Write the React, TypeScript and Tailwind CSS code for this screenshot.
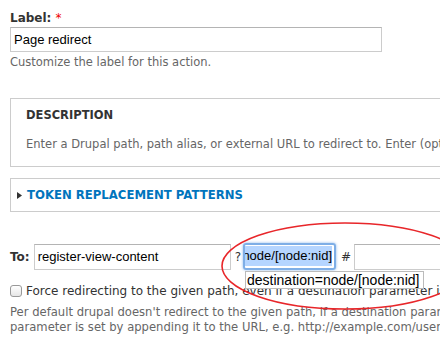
import React from "react";

export default function App() {
  const ui = { fontFamily: '"DejaVu Sans", Verdana, sans-serif' };
  const inp = { fontFamily: '"Liberation Sans", Arial, sans-serif' };
  return (
    <div className="relative w-[440px] h-[353px] overflow-hidden bg-white text-[#333]" style={ui}>
      <div className="pl-[10px] pt-[11px] flex flex-col">
        <div className="text-[12px] leading-[14px] font-bold text-[#333]">
          Label: <span className="text-[#e00] font-normal">*</span>
        </div>
        <div className="mt-[2px] w-[372px] h-[25px] border border-[#ccc] border-t-[#b4b4b4] flex items-center pl-[3px] text-[13px] text-black" style={inp}>
          Page redirect
        </div>
        <div className="mt-[3px] text-[11.5px] leading-[14px] text-[#666] whitespace-nowrap">Customize the label for this action.</div>

        <div className="mt-[29px] w-[470px] h-[69px] border border-[#ccc] flex flex-col pl-[15px] pt-[9px] shrink-0">
          <div className="text-[11.5px] leading-[14px] font-bold text-[#333]">DESCRIPTION</div>
          <div className="mt-[15px] text-[11.5px] leading-[14px] text-[#666] whitespace-nowrap">
            Enter a Drupal path, path alias, or external URL to redirect to. Enter (optional) queries after "?" and (optional) anchor after "#".
          </div>
        </div>

        <div className="mt-[11px] w-[470px] h-[34px] border border-[#ccc] flex items-center pl-[6px] shrink-0">
          <svg width="5" height="7" viewBox="0 0 5 7" className="mr-[5px] shrink-0"><path d="M0 0 L5 3.5 L0 7 Z" fill="#333" /></svg>
          <span className="text-[11.7px] leading-[14px] font-bold text-[#0074bd] whitespace-nowrap">TOKEN REPLACEMENT PATTERNS</span>
        </div>

        <div className="mt-[32px] flex items-center relative">
          <span className="text-[12px] font-bold text-[#333] mr-[4px] shrink-0">To:</span>
          <div className="w-[197px] h-[26px] shrink-0 border border-[#ccc] border-t-[#b4b4b4] flex items-center pl-[3px] text-[13px] text-black" style={inp}>
            register-view-content
          </div>
          <span className="ml-[4px] mr-[2px] text-[12px] text-[#333] shrink-0">?</span>
          <div className="w-[93px] h-[27px] -mt-[2px] shrink-0 rounded-[3px] border-[2px] border-[#7eaee6] shadow-[0_0_3px_#8cb8ec] flex items-center justify-end pr-[2px] overflow-hidden text-[13px] text-black" style={inp}>
            <span className="whitespace-nowrap bg-[#b5d5ff] shrink-0">node/[node:nid]</span>
          </div>
          <span className="ml-[5px] mr-[3px] text-[12px] text-[#333] shrink-0">#</span>
          <div className="w-[110px] h-[26px] shrink-0 border border-[#ccc] border-t-[#b4b4b4]"></div>
          <div className="absolute left-[235px] top-[27px] w-[179px] h-[18px] border border-[#bbb] bg-white flex items-center pl-[1px] text-[14px] text-black z-10 whitespace-nowrap" style={inp}>
            destination=node/[node:nid]
          </div>
        </div>

        <div className="mt-[14px] flex items-center">
          <div className="w-[12px] h-[12px] shrink-0 rounded-[3px] border border-[#999] bg-gradient-to-b from-white to-[#e6e6e6] mr-[4px]"></div>
          <span className="text-[12px] leading-[14px] text-[#333] whitespace-nowrap">Force redirecting to the given path, even if a destination parameter is given.</span>
        </div>
        <div className="mt-[7px] text-[11.6px] leading-[15px] text-[#666] whitespace-nowrap">
          <div>Per default drupal doesn't redirect to the given path, if a destination parameter is set.</div>
          <div>parameter is set by appending it to the URL, e.g. http://example.com/user?destination=node/1</div>
        </div>
      </div>
      <svg className="absolute left-0 top-0 pointer-events-none z-20" width="440" height="353">
        <ellipse cx="345" cy="266" rx="123" ry="43" fill="none" stroke="#e8262a" strokeWidth="1.6" />
      </svg>
    </div>
  );
}
